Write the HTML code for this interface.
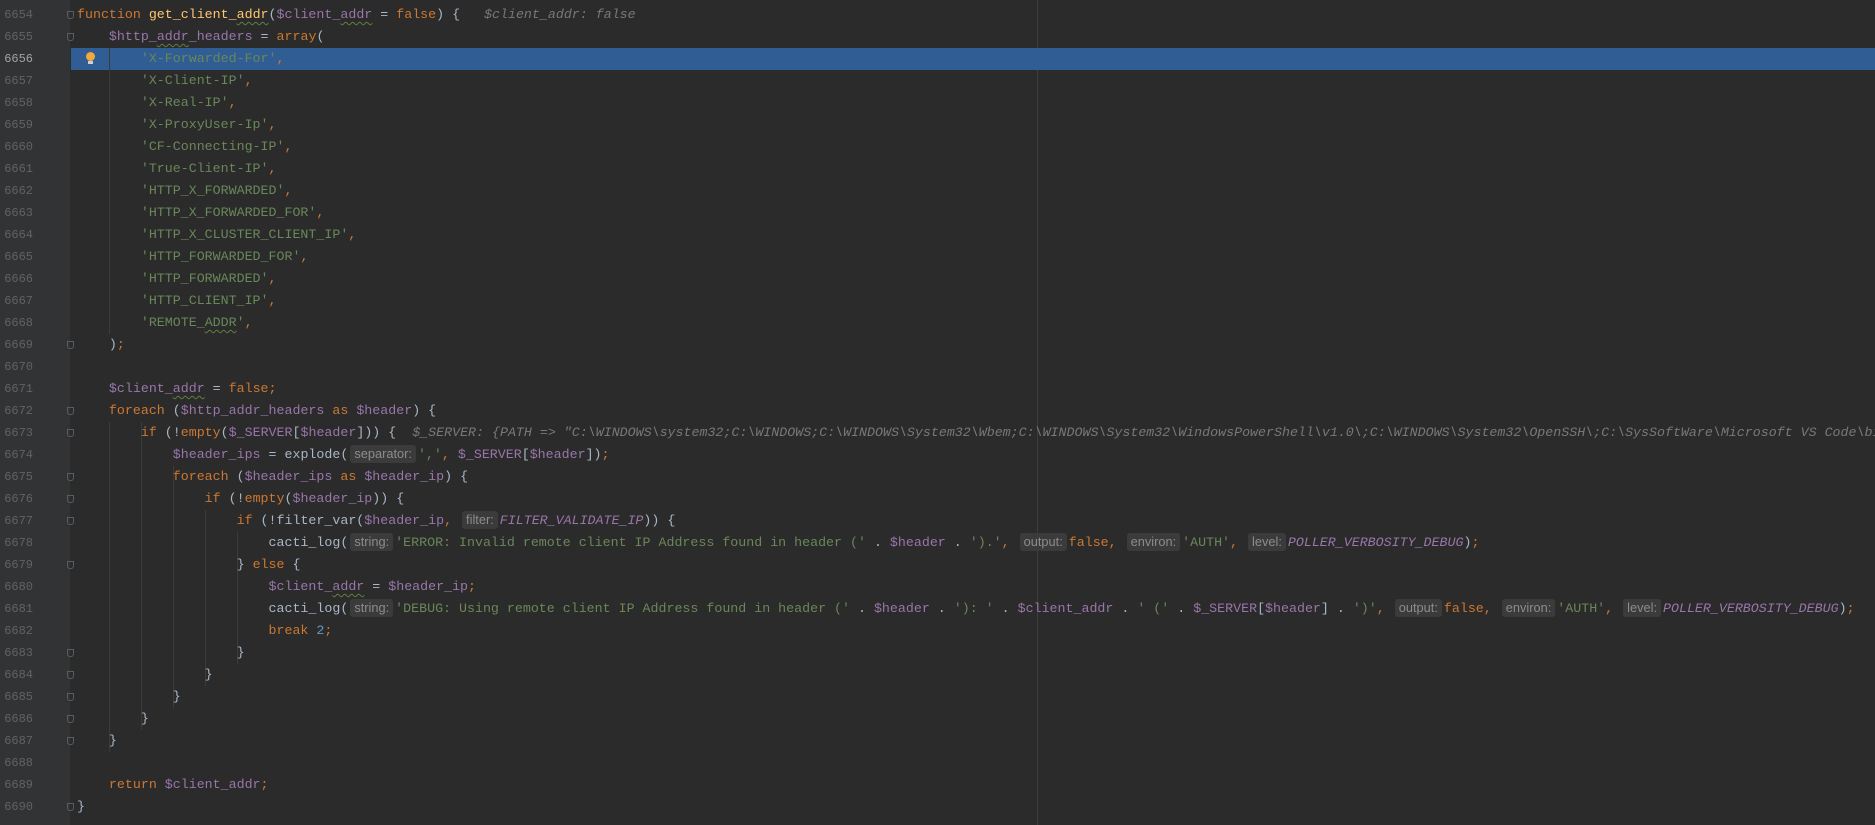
<!DOCTYPE html>
<html><head><meta charset="utf-8"><style>
html,body{margin:0;padding:0;width:1875px;height:825px;overflow:hidden;background:#2b2b2b;}
.g{position:absolute;left:0;top:0;width:70px;height:825px;background:#313335;}
.row{position:absolute;left:0;height:22px;width:1875px;}
.num{position:absolute;left:0;width:33px;text-align:right;font:12px/22px "Liberation Mono",monospace;color:#606366;}
.code{position:absolute;left:77px;top:0;white-space:pre;font:13.3px/22px "Liberation Mono",monospace;color:#a9b7c6;}
.hl{background:#2f5d94;left:71px;width:1804px;}
.k{color:#cc7832}.s{color:#6a8759}.v{color:#9876aa}.f{color:#ffc66d}.c{color:#9876aa;font-style:italic}
.n{color:#6897bb}
.h{color:#787878;font-style:italic}
.i{display:inline-block;font:12.8px/18px "Liberation Sans",sans-serif;color:#8c8c8c;background:#3b3b3b;border-radius:3px;padding:0 4px;margin:0 2px 0 2px;vertical-align:0px;font-style:normal}
.u{text-decoration:underline wavy #5f7f3f;text-underline-offset:3px;text-decoration-thickness:1px}
.vl{position:absolute;left:1037px;top:0;width:1px;height:825px;background:#3d3d3d;}
.ig{position:absolute;width:1px;background:#3b3b3b;}
.fm{position:absolute;left:67px;width:7px;height:8px;border:1px solid #5a5d60;border-radius:0 0 3px 3px;box-sizing:border-box}
</style></head><body>
<div class="g"></div>
<div class="vl"></div>
<div class="row hl" style="top:48px"></div>
<div class="ig" style="left:109px;top:48px;height:286px"></div>
<div class="ig" style="left:109px;top:422px;height:330px"></div>
<div class="ig" style="left:141px;top:422px;height:308px"></div>
<div class="ig" style="left:173px;top:466px;height:242px"></div>
<div class="ig" style="left:205px;top:510px;height:176px"></div>
<div class="ig" style="left:237px;top:532px;height:132px"></div>
<div style="position:absolute;left:86px;top:52px;width:9px;height:9px;border-radius:50%;background:#f2a93b"></div>
<div style="position:absolute;left:88px;top:61px;width:5px;height:3px;background:#d0d0d0"></div>
<div id="c"></div>
<script>
const L=[
'<span class="k">function </span><span class="f">get_client_<span class="u">addr</span></span>(<span class="v">$client_<span class="u">addr</span></span> = <span class="k">false</span>) {   <span class="h">$client_addr: false</span>',
'    <span class="v">$http_<span class="u">addr</span>_headers</span> = <span class="k">array</span>(',
"        <span class=s>'X-Forwarded-For'</span><span class=k>,</span>",
"        <span class=s>'X-Client-IP'</span><span class=k>,</span>",
"        <span class=s>'X-Real-IP'</span><span class=k>,</span>",
"        <span class=s>'X-ProxyUser-Ip'</span><span class=k>,</span>",
"        <span class=s>'CF-Connecting-IP'</span><span class=k>,</span>",
"        <span class=s>'True-Client-IP'</span><span class=k>,</span>",
"        <span class=s>'HTTP_X_FORWARDED'</span><span class=k>,</span>",
"        <span class=s>'HTTP_X_FORWARDED_FOR'</span><span class=k>,</span>",
"        <span class=s>'HTTP_X_CLUSTER_CLIENT_IP'</span><span class=k>,</span>",
"        <span class=s>'HTTP_FORWARDED_FOR'</span><span class=k>,</span>",
"        <span class=s>'HTTP_FORWARDED'</span><span class=k>,</span>",
"        <span class=s>'HTTP_CLIENT_IP'</span><span class=k>,</span>",
"        <span class=s>'REMOTE_<span class=u>ADDR</span>'</span><span class=k>,</span>",
'    )<span class=k>;</span>',
'',
'    <span class=v>$client_<span class=u>addr</span></span> = <span class=k>false;</span>',
'    <span class=k>foreach </span>(<span class=v>$http_addr_headers</span> <span class=k>as </span><span class=v>$header</span>) {',
'        <span class=k>if </span>(!<span class=k>empty</span>(<span class=v>$_SERVER</span>[<span class=v>$header</span>])) {  <span class=h>$_SERVER: {PATH => "C:\\WINDOWS\\system32;C:\\WINDOWS;C:\\WINDOWS\\System32\\Wbem;C:\\WINDOWS\\System32\\WindowsPowerShell\\v1.0\\;C:\\WINDOWS\\System32\\OpenSSH\\;C:\\SysSoftWare\\Microsoft VS Code\\bin</span>',
"            <span class=v>$header_ips</span> = explode(<span class=i>separator:</span><span class=s>','</span><span class=k>, </span><span class=v>$_SERVER</span>[<span class=v>$header</span>])<span class=k>;</span>",
'            <span class=k>foreach </span>(<span class=v>$header_ips</span> <span class=k>as </span><span class=v>$header_ip</span>) {',
'                <span class=k>if </span>(!<span class=k>empty</span>(<span class=v>$header_ip</span>)) {',
'                    <span class=k>if </span>(!filter_var(<span class=v>$header_ip</span><span class=k>, </span><span class=i>filter:</span><span class=c>FILTER_VALIDATE_IP</span>)) {',
"                        cacti_log(<span class=i>string:</span><span class=s>'ERROR: Invalid remote client IP Address found in header ('</span> . <span class=v>$header</span> . <span class=s>').'</span><span class=k>, </span><span class=i>output:</span><span class=k>false, </span><span class=i>environ:</span><span class=s>'AUTH'</span><span class=k>, </span><span class=i>level:</span><span class=c>POLLER_VERBOSITY_DEBUG</span>)<span class=k>;</span>",
'                    } <span class=k>else </span>{',
'                        <span class=v>$client_<span class=u>addr</span></span> = <span class=v>$header_ip</span><span class=k>;</span>',
"                        cacti_log(<span class=i>string:</span><span class=s>'DEBUG: Using remote client IP Address found in header ('</span> . <span class=v>$header</span> . <span class=s>'): '</span> . <span class=v>$client_addr</span> . <span class=s>' ('</span> . <span class=v>$_SERVER</span>[<span class=v>$header</span>] . <span class=s>')'</span><span class=k>, </span><span class=i>output:</span><span class=k>false, </span><span class=i>environ:</span><span class=s>'AUTH'</span><span class=k>, </span><span class=i>level:</span><span class=c>POLLER_VERBOSITY_DEBUG</span>)<span class=k>;</span>",
'                        <span class=k>break </span><span class=n>2</span><span class=k>;</span>',
'                    }','                }','            }','        }','    }','',
'    <span class=k>return </span><span class=v>$client_addr</span><span class=k>;</span>',
'}'];
const folds=[0,1,15,18,19,21,22,23,25,29,30,31,32,33,36];
let h='';
L.forEach((t,i)=>{const y=4+22*i;
h+=`<div class="row" style="top:${y}px"><div class="num" style="${i==2?'color:#a4a3a3':''}">${6654+i}</div><div class="code">${t}</div></div>`;
if(folds.includes(i))h+=`<div class="fm" style="top:${y+7}px"></div>`;});
document.getElementById('c').innerHTML=h;
</script>
</body></html>
